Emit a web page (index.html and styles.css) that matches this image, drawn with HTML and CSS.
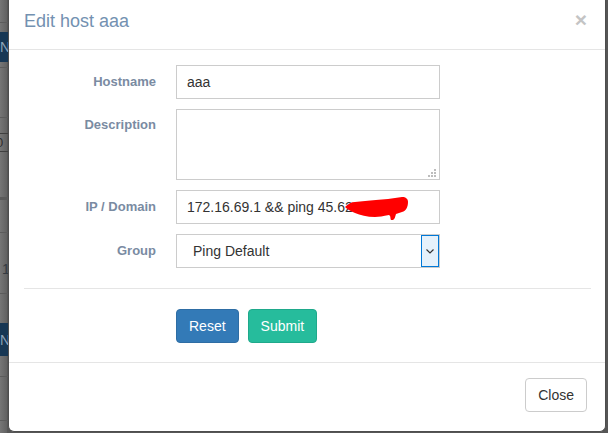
FILE: index.html
```html
<!DOCTYPE html>
<html lang="en">
<head>
<meta charset="utf-8">
<title>Edit host aaa</title>
<link rel="stylesheet" href="styles.css">
</head>
<body>
<div class="screen">
  <div class="strip">
    <div class="h22"></div>
    <div class="rule"></div>
    <div class="h9"></div>
    <div class="navy h30">N</div>
    <div class="h5"></div>
    <div class="rule"></div>
    <div class="h49"></div>
    <div class="rule"></div>
    <div class="h15"></div>
    <div class="boxed">0</div>
    <div class="h45"></div>
    <div class="band"></div>
    <div class="h32"></div>
    <div class="rule"></div>
    <div class="h28"></div>
    <div class="digit">1</div>
    <div class="h16"></div>
    <div class="rule"></div>
    <div class="h29"></div>
    <div class="navy h33">N</div>
    <div class="h20"></div>
    <div class="rule"></div>
    <div class="h43"></div>
    <div class="rule"></div>
  </div>

  <div class="modal">
    <div class="modal-header">
      <h4 class="modal-title">Edit host aaa</h4>
      <span class="close">&times;</span>
    </div>
    <div class="modal-body">
      <form class="form-grid">
        <label class="label label-mid">Hostname</label>
        <input class="control" type="text" value="aaa">

        <label class="label">Description</label>
        <div class="area-wrap">
          <textarea class="control area"></textarea>
          <span class="grip">
            <svg width="9" height="9" viewBox="0 0 9 9"><g fill="#bdbdbd"><rect x="6" y="0" width="2" height="2"/><rect x="3" y="3" width="2" height="2"/><rect x="6" y="3" width="2" height="2"/><rect x="0" y="6" width="2" height="2"/><rect x="3" y="6" width="2" height="2"/><rect x="6" y="6" width="2" height="2"/></g></svg>
          </span>
        </div>

        <label class="label label-mid">IP / Domain</label>
        <div class="field">
          <input class="control" type="text" value="172.16.69.1 &amp;&amp; ping 45.62.118.9">
          <svg class="redact" width="64" height="26" viewBox="0 0 64 26"><path fill="#ff0000" d="M0 10 C3 7 6 5 10 5 C20 4 30 3 43 2 L57 0 C61 0 63 2 63 5 C63 10 61 14 57 15 L51 17 C50 20 50 22 48 23 L46 23 C45 21 46 19 44 18 C38 19 34 20 30 20 C22 20 15 18 10 16 C5 14 2 12 0 10 Z"/></svg>
        </div>

        <label class="label label-mid">Group</label>
        <div class="select">
          <span class="select-text">Ping Default</span>
          <span class="select-arrow">
            <svg width="8" height="5" viewBox="0 0 8 5"><polyline points="0.5,0.5 4,4 7.5,0.5" fill="none" stroke="#333" stroke-width="1.2"/></svg>
          </span>
        </div>
      </form>
      <hr class="divider">
      <div class="actions">
        <button class="btn btn-primary" type="button">Reset</button>
        <button class="btn btn-success" type="button">Submit</button>
      </div>
    </div>
    <div class="modal-footer">
      <button class="btn btn-default" type="button">Close</button>
    </div>
  </div>
</div>
</body>
</html>
```

FILE: styles.css
```css
* { box-sizing: border-box; }

html, body {
  margin: 0;
  padding: 0;
}

body {
  font-family: "Liberation Sans", Arial, sans-serif;
  font-size: 14px;
  color: #333;
  background: #555;
  overflow: hidden;
}

.screen {
  display: flex;
  width: 608px;
  height: 433px;
  background: #565656;
}

/* dimmed page behind the modal */
.strip {
  width: 8px;
  flex: none;
  display: flex;
  flex-direction: column;
  background: linear-gradient(90deg, #767676, #626262 85%, #4f4f4f);
  overflow: hidden;
}
.rule { height: 1px; background: #5c5c5c; flex: none; }
.band { height: 3px; background: #5a5a5a; flex: none; }
.h5 { height: 5px; flex: none; }
.h9 { height: 9px; flex: none; }
.h15 { height: 15px; flex: none; }
.h16 { height: 16px; flex: none; }
.h20 { height: 20px; flex: none; }
.h22 { height: 22px; flex: none; }
.h28 { height: 28px; flex: none; }
.h29 { height: 29px; flex: none; }
.h32 { height: 32px; flex: none; }
.h43 { height: 43px; flex: none; }
.h45 { height: 45px; flex: none; }
.h49 { height: 49px; flex: none; }
.h30 { height: 30px; }
.h33 { height: 33px; }
.navy {
  flex: none;
  background: #173754;
  color: #8ea3b8;
  font-size: 14px;
  display: flex;
  align-items: center;
}
.boxed {
  flex: none;
  height: 19px;
  border-top: 1px solid #3f3f3f;
  border-bottom: 1px solid #3f3f3f;
  color: #2e2e2e;
  font-size: 13px;
  line-height: 17px;
  margin-left: -4px;
}
.digit {
  flex: none;
  height: 16px;
  color: #333a42;
  font-size: 14px;
  line-height: 16px;
  padding-left: 2px;
}

/* modal */
.modal {
  width: 598px;
  height: 432px;
  flex: none;
  background: #fff;
  border: 1px solid #4e4e4e;
  border-top: none;
  border-radius: 0 0 6px 6px;
  display: flex;
  flex-direction: column;
  overflow: hidden;
}

.modal-header {
  height: 41px;
  flex: none;
  padding: 8px 15px 0 15px;
  border-bottom: 1px solid #e5e5e5;
  display: flex;
  justify-content: space-between;
  align-items: flex-start;
  box-sizing: content-box;
}

.modal-title {
  margin: 0;
  font-size: 18px;
  font-weight: normal;
  line-height: 26px;
  color: #7391b1;
}

.close {
  font-size: 21px;
  font-weight: bold;
  line-height: 26px;
  color: #c4c4c4;
  margin-right: 3px;
  margin-top: -1px;
}

.modal-body {
  padding: 15px 14px 19px 15px;
  flex: none;
}

.form-grid {
  margin: 0;
  display: grid;
  grid-template-columns: 132px 264px;
  column-gap: 20px;
  row-gap: 10px;
}

.label {
  text-align: right;
  font-weight: bold;
  font-size: 13px;
  line-height: 20px;
  color: #7a8ba2;
  padding-top: 6px;
}
.label-mid { padding-top: 7px; }

.control {
  display: block;
  width: 264px;
  height: 34px;
  margin: 0;
  padding: 0 10px;
  border: 1px solid #ccc;
  border-radius: 0;
  background: #fff;
  font-family: "Liberation Sans", Arial, sans-serif;
  font-size: 14px;
  color: #333;
  outline: none;
}

.area-wrap {
  position: relative;
  height: 71px;
}
.area {
  height: 71px;
  resize: none;
}
.grip {
  position: absolute;
  right: 3px;
  bottom: 2px;
  width: 9px;
  height: 9px;
  line-height: 0;
}

.field {
  position: relative;
}
.redact {
  position: absolute;
  left: 169px;
  top: 7px;
}

.select {
  width: 264px;
  height: 34px;
  border: 1px solid #ccc;
  display: flex;
  align-items: center;
  justify-content: space-between;
}
.select-text {
  padding-left: 16px;
  font-size: 14px;
  color: #333;
}
.select-arrow {
  width: 18px;
  height: 32px;
  border: 1px solid #0078d7;
  background: #e5f1fb;
  display: flex;
  align-items: center;
  justify-content: center;
}

.divider {
  margin: 20px 0 20px 0;
  border: 0;
  border-top: 1px solid #e5e5e5;
  height: 0;
}

.actions {
  display: flex;
  gap: 9px;
  padding-left: 152px;
}

.btn {
  height: 34px;
  padding: 0 12px;
  font-family: "Liberation Sans", Arial, sans-serif;
  font-size: 14px;
  line-height: 20px;
  border: 1px solid transparent;
  border-radius: 4px;
  cursor: pointer;
}
.btn-primary {
  background: #337ab7;
  border-color: #2e6da4;
  color: #fff;
}
.btn-success {
  background: #26bc9c;
  border-color: #1fa98b;
  color: #fff;
}
.btn-default {
  background: #fff;
  border-color: #ccc;
  color: #333;
}

.modal-footer {
  flex: none;
  border-top: 1px solid #e5e5e5;
  padding: 15px 18px 19px 15px;
  display: flex;
  justify-content: flex-end;
}
```
